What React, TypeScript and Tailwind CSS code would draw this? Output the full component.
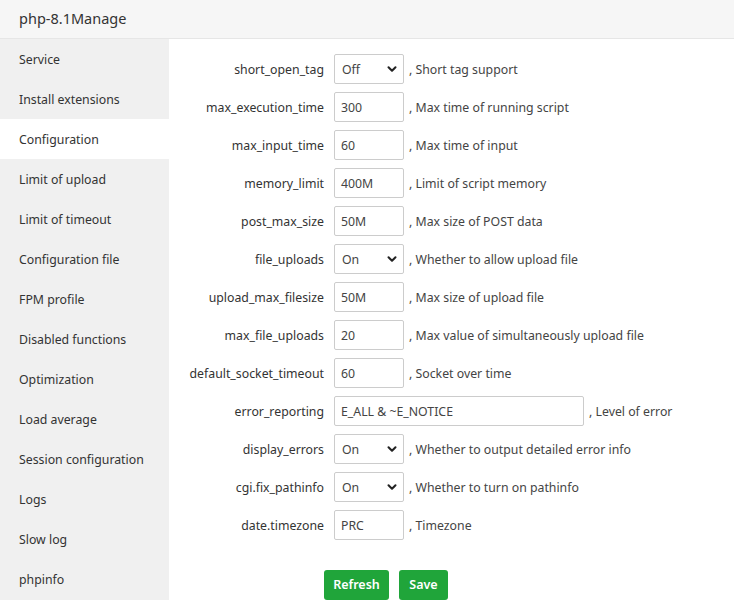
import { ChevronDown } from 'lucide-react';

type Row = {
  label: string;
  value: string;
  desc: string;
  select?: boolean;
  wide?: boolean;
};

const menu = [
  'Service',
  'Install extensions',
  'Configuration',
  'Limit of upload',
  'Limit of timeout',
  'Configuration file',
  'FPM profile',
  'Disabled functions',
  'Optimization',
  'Load average',
  'Session configuration',
  'Logs',
  'Slow log',
  'phpinfo',
];

const rows: Row[] = [
  { label: 'short_open_tag', value: 'Off', desc: 'Short tag support', select: true },
  { label: 'max_execution_time', value: '300', desc: 'Max time of running script' },
  { label: 'max_input_time', value: '60', desc: 'Max time of input' },
  { label: 'memory_limit', value: '400M', desc: 'Limit of script memory' },
  { label: 'post_max_size', value: '50M', desc: 'Max size of POST data' },
  { label: 'file_uploads', value: 'On', desc: 'Whether to allow upload file', select: true },
  { label: 'upload_max_filesize', value: '50M', desc: 'Max size of upload file' },
  { label: 'max_file_uploads', value: '20', desc: 'Max value of simultaneously upload file' },
  { label: 'default_socket_timeout', value: '60', desc: 'Socket over time' },
  { label: 'error_reporting', value: 'E_ALL & ~E_NOTICE', desc: 'Level of error', wide: true },
  { label: 'display_errors', value: 'On', desc: 'Whether to output detailed error info', select: true },
  { label: 'cgi.fix_pathinfo', value: 'On', desc: 'Whether to turn on pathinfo', select: true },
  { label: 'date.timezone', value: 'PRC', desc: 'Timezone' },
];

export default function App() {
  return (
    <div className="w-[734px] h-[600px] overflow-hidden bg-white text-[#333] font-['Noto_Sans',sans-serif] text-[12.3px] flex flex-col">
      {/* Header */}
      <div className="h-[39px] shrink-0 bg-[#f6f6f6] border-b border-[#e6e6e6] flex items-center pl-[19px] text-[14.5px] text-[#333]">
        php-8.1Manage
      </div>

      <div className="flex flex-1 min-h-0">
        {/* Sidebar */}
        <div className="w-[169px] shrink-0 bg-[#f0f0f0]">
          {menu.map((item) => (
            <div
              key={item}
              className={
                item === 'Configuration'
                  ? 'h-[40px] flex items-center pl-[19px] pt-[3px] bg-white text-[#333]'
                  : 'h-[40px] flex items-center pl-[19px] pt-[3px] text-[#333]'
              }
            >
              {item}
            </div>
          ))}
        </div>

        {/* Form */}
        <div className="flex-1 pt-[15px]">
          <div className="flex flex-col gap-[8px]">
            {rows.map((r) => (
              <div key={r.label} className="flex items-center h-[30px]">
                <div className="w-[155px] text-right mr-[10px] pt-[3px] text-[#333]">{r.label}</div>
                {r.select ? (
                  <div className="relative w-[70px] h-[30px] border border-[#ccc] rounded-[2px] flex items-center pl-[7px] pt-[3px] text-[#444]">
                    {r.value}
                    <ChevronDown className="absolute right-[4px] top-[7px] w-[14px] h-[14px] text-[#222]" strokeWidth={3.5} />
                  </div>
                ) : (
                  <div
                    className={
                      r.wide
                        ? 'w-[250px] h-[30px] border border-[#ccc] rounded-[2px] flex items-center pl-[6px] pt-[3px] text-[#444]'
                        : 'w-[70px] h-[30px] border border-[#ccc] rounded-[2px] flex items-center pl-[6px] pt-[3px] text-[#444]'
                    }
                  >
                    {r.value}
                  </div>
                )}
                <div className="ml-[5px] pt-[3px] text-[#444]">, {r.desc}</div>
              </div>
            ))}
          </div>

          <div className="flex gap-[10px] pl-[155px] mt-[30px]">
            <button className="h-[30px] w-[65px] bg-[#20a53a] text-white rounded-[3px] text-[12.5px] font-semibold">
              Refresh
            </button>
            <button className="h-[30px] w-[49px] bg-[#20a53a] text-white rounded-[3px] text-[12.5px] font-semibold">
              Save
            </button>
          </div>
        </div>
      </div>
    </div>
  );
}
